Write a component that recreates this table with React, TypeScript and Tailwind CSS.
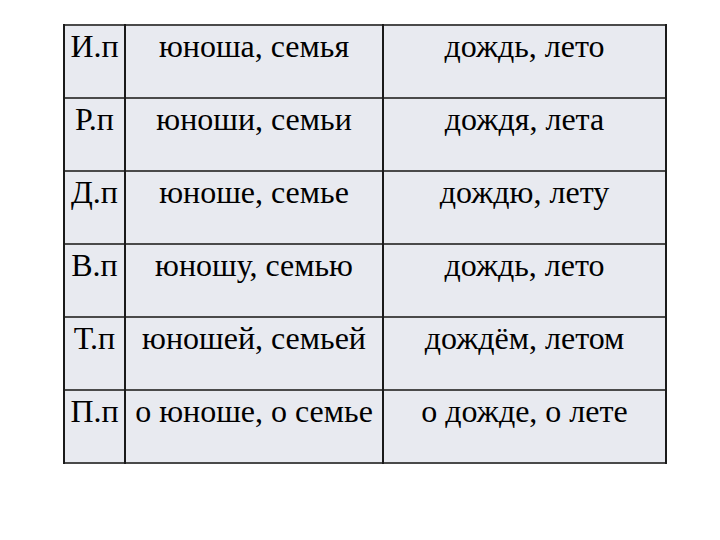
const rows: [string, string, string][] = [
  ["И.п", "юноша, семья", "дождь, лето"],
  ["Р.п", "юноши, семьи", "дождя, лета"],
  ["Д.п", "юноше, семье", "дождю, лету"],
  ["В.п", "юношу, семью", "дождь, лето"],
  ["Т.п", "юношей, семьей", "дождём, летом"],
  ["П.п", "о юноше, о семье", "о дожде, о лете"],
];

export default function App() {
  return (
    <div className="w-[720px] h-[540px] bg-white pt-[24px] pl-[63px]">
      <table className="border-collapse bg-[#e8eaf0]">
        <colgroup>
          <col className="w-[61px]" />
          <col className="w-[258px]" />
          <col className="w-[283px]" />
        </colgroup>
        <tbody>
          {rows.map((r, i) => (
            <tr key={i} className="h-[73px] border-y-2 border-[#4a4a4a]">
              {r.map((c, j) => (
                <td
                  key={j}
                  className="border-x-2 border-x-[#1a1a1a] align-top text-center pt-[2px] px-0 whitespace-nowrap font-['Liberation_Serif','Times_New_Roman',serif] text-[32px] leading-[1.15] text-black"
                >
                  {c}
                </td>
              ))}
            </tr>
          ))}
        </tbody>
      </table>
    </div>
  );
}
